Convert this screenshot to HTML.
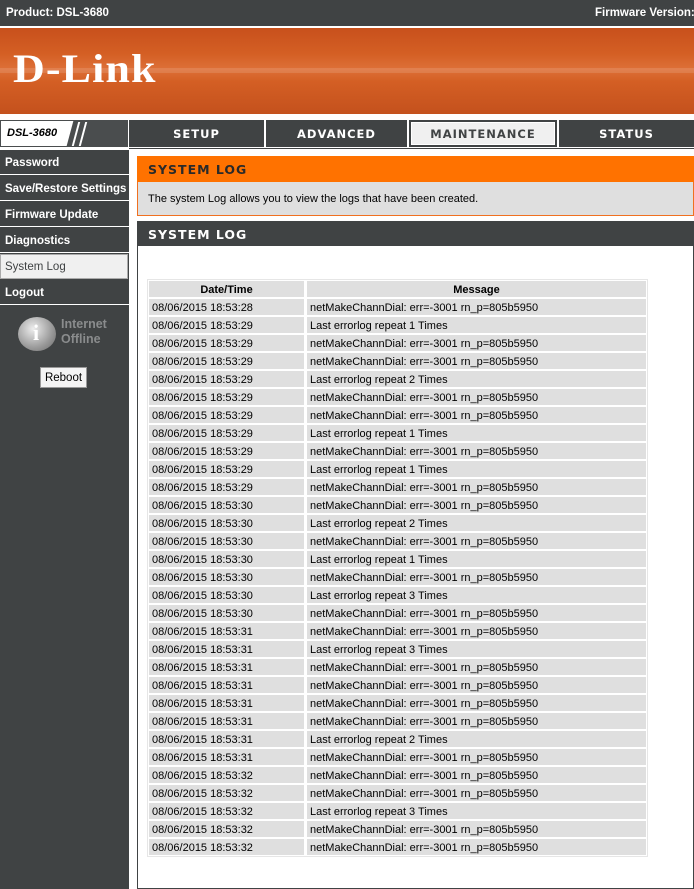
<!DOCTYPE html>
<html><head><meta charset="utf-8"><style>
*{margin:0;padding:0;box-sizing:border-box}
body{width:694px;height:889px;overflow:hidden;background:#fff;font-family:"Liberation Sans","DejaVu Sans",sans-serif;font-size:11.5px;color:#000;position:relative}
.abs{position:absolute}
#top{left:0;top:0;width:694px;height:26px;background:#404344;color:#fff;font-weight:bold;font-size:11.5px}
#banner{left:0;top:28px;width:694px;height:86px;background:linear-gradient(180deg,#c8501c 0%,#d45f24 30%,#dd7038 48%,#d45f24 62%,#c4511d 100%)}
.navt{top:120px;height:27px;background:#404344;color:#fff;font-weight:bold;font-size:11.5px;letter-spacing:1px;text-align:center;line-height:28px;font-family:"DejaVu Sans",sans-serif}
#side{left:0;top:150px;width:129px;height:739px;background:#404344}
.si{left:0;width:129px;height:25px;color:#fff;font-weight:bold;line-height:27px;padding-left:5px;border-bottom:1px solid #fff}
.cell{position:absolute;height:16px;background:#dfdfdf;line-height:18px;padding-left:3px;font-size:11px}
</style></head><body>
<div class="abs" id="top"><span class="abs" style="left:6px;top:7px">Product: DSL-3680</span><span class="abs" style="left:595px;top:7px;white-space:nowrap">Firmware Version: v</span></div>
<div class="abs" id="banner">
<div class="abs" style="left:0;top:40px;width:694px;height:5px;background:rgba(255,255,255,0.12)"></div>
<div class="abs" style="left:13px;top:17px;color:#fff;font-family:'Liberation Serif',serif;font-weight:bold;font-size:40px;letter-spacing:1px;transform:scaleX(1.1);transform-origin:left">D-Link</div>
</div>
<div class="abs" style="left:0;top:120px;width:128px;height:27px;background:#4a4d4e"></div>
<div class="abs" style="left:1px;top:121px;width:65px;height:25px;background:#fff;font-style:italic;font-weight:bold;font-size:11px;line-height:25px;padding-left:6px">DSL-3680</div>
<div class="abs" style="left:60px;top:121px;width:10px;height:25px;background:#fff;transform:skewX(-15deg)"></div>
<div class="abs" style="left:75px;top:122px;width:2px;height:24px;background:#fff;transform:skewX(-15deg)"></div>
<div class="abs" style="left:82px;top:122px;width:2px;height:24px;background:#fff;transform:skewX(-15deg)"></div>
<div class="abs navt" style="left:129px;width:135px">SETUP</div>
<div class="abs navt" style="left:266px;width:141px">ADVANCED</div>
<div class="abs navt" style="left:409px;width:148px;background:#f0f0f0;color:#404344;border:2px solid #404344;box-shadow:inset 0 0 0 1px #fff;line-height:24px">MAINTENANCE</div>
<div class="abs navt" style="left:559px;width:135px">STATUS</div>
<div class="abs" style="left:129px;top:148px;width:565px;height:1px;background:#404344"></div>
<div class="abs" id="side"></div>
<div class="abs si" style="top:150px">Password</div>
<div class="abs si" style="top:176px">Save/Restore Settings</div>
<div class="abs si" style="top:202px">Firmware Update</div>
<div class="abs si" style="top:228px">Diagnostics</div>
<div class="abs si" style="top:254px;background:#f0f0f0;color:#404344;font-weight:normal;border:1px solid #aaa;left:0;width:128px;line-height:25px;padding-left:4px">System Log</div>
<div class="abs si" style="top:280px">Logout</div>
<div class="abs" style="left:18px;top:317px;width:38px;height:34px;border-radius:50%;background:radial-gradient(circle at 40% 35%,#eee,#999 60%,#666)"></div>
<div class="abs" style="left:33px;top:320px;color:#fff;font-family:'Liberation Serif',serif;font-weight:bold;font-size:22px">i</div>
<div class="abs" style="left:61px;top:317px;color:#8a8c8d;font-weight:bold;font-size:12.5px;line-height:15px">Internet<br>Offline</div>
<div class="abs" style="left:40px;top:367px;width:47px;height:21px;background:#f4f4f4;border:1px solid #999;font-size:11.5px;text-align:center;line-height:20px">Reboot</div>
<div class="abs" style="left:137px;top:156px;width:557px;height:60px;border:1px solid #f07020;background:#dfdfdf"></div>
<div class="abs" style="left:137px;top:156px;width:557px;height:26px;background:#ff7200;color:#2a2a2a;font-weight:bold;font-size:12.5px;letter-spacing:1px;line-height:28px;padding-left:11px;font-family:'DejaVu Sans',sans-serif">SYSTEM LOG</div>
<div class="abs" style="left:148px;top:193px;font-size:11px">The system Log allows you to view the logs that have been created.</div>
<div class="abs" style="left:137px;top:221px;width:557px;height:668px;border:1px solid #404344;border-top:none"></div>
<div class="abs" style="left:137px;top:221px;width:557px;height:25px;background:#404344;color:#fff;font-weight:bold;font-size:12.5px;letter-spacing:1px;line-height:27px;padding-left:11px;font-family:'DejaVu Sans',sans-serif">SYSTEM LOG</div>
<div class="abs" style="left:147px;top:279px;width:501px;height:578px;border:1px solid #e6e6e6"></div>
<div id="tbl"></div>
<script>
var d=[["28",0],["29",1],["29",0],["29",0],["29",2],["29",0],["29",0],["29",1],["29",0],["29",1],["29",0],["30",0],["30",2],["30",0],["30",1],["30",0],["30",3],["30",0],["31",0],["31",3],["31",0],["31",0],["31",0],["31",0],["31",2],["31",0],["32",0],["32",0],["32",3],["32",0],["32",0]];
var h='<div class="cell" style="left:149px;top:281px;width:155px;text-align:center;font-weight:bold;padding:0">Date/Time</div><div class="cell" style="left:307px;top:281px;width:339px;text-align:center;font-weight:bold;padding:0">Message</div>';
for(var i=0;i<d.length;i++){var y=299+i*18;var m=d[i][1]?('Last errorlog repeat '+d[i][1]+' Times'):'netMakeChannDial: err=-3001 rn_p=805b5950';
h+='<div class="cell" style="left:149px;top:'+y+'px;width:155px">08/06/2015 18:53:'+d[i][0]+'</div><div class="cell" style="left:307px;top:'+y+'px;width:339px">'+m+'</div>';}
document.getElementById('tbl').innerHTML=h;
</script>
</body></html>
